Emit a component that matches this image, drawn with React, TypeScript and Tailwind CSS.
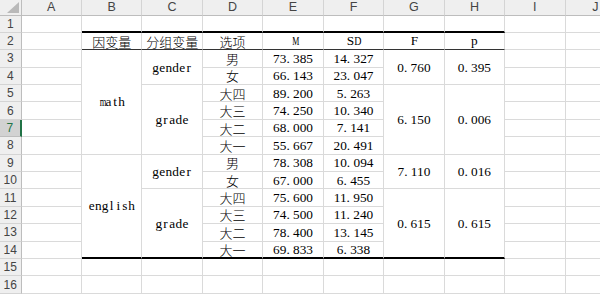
import React from "react";

const CELL =
  "border-r border-b border-[#dadada] bg-white flex items-center justify-center overflow-hidden whitespace-nowrap text-black";
const COLH =
  "border-r border-b border-r-[#d4d4d4] border-b-[#bdbdbd] bg-[#efefef] flex items-center justify-center text-[12.5px] text-[#444] font-['Liberation_Sans',sans-serif] overflow-hidden";
const ROWH =
  "border-r border-b border-r-[#bdbdbd] border-b-[#d4d4d4] bg-[#efefef] flex items-center justify-center text-[12px] text-[#444] font-['Liberation_Sans',sans-serif] overflow-hidden";
const ROWH_SEL =
  "border-r-2 border-b border-r-[#217346] border-b-[#bdbdbd] bg-[#d2d2d2] flex items-center justify-center text-[12px] text-[#217346] font-['Liberation_Sans',sans-serif] overflow-hidden";
const THICK = "border-b-2 border-b-black";
const SPAN: Record<number, string> = { 2: "row-span-2", 4: "row-span-4", 6: "row-span-6" };

// narrow the glyphs that are wider than a half-width cell
const SQUEEZE: Record<string, string> = {
  m: "scale-x-[0.64]",
  M: "scale-x-[0.6]",
  D: "scale-x-[0.75]",
};

function Num({ v }: { v: string }) {
  const [a, b] = v.split(".");
  return (
    <span className="font-['Liberation_Serif',serif] text-[13.3px] leading-none">
      {a}
      <span className="inline-block w-[0.5em]">.</span>
      {b}
    </span>
  );
}

function Lat({ t }: { t: string }) {
  return (
    <span className="font-['Liberation_Serif',serif] text-[13.3px] leading-none flex">
      {t.split("").map((ch, i) => (
        <span key={i} className="inline-block w-[0.5em] text-center">
          <span className={"inline-block " + (SQUEEZE[ch] ?? "")}>{ch}</span>
        </span>
      ))}
    </span>
  );
}

function Cjk({ t }: { t: string }) {
  return (
    <span className="font-['Noto_Sans_CJK_SC',sans-serif] text-[13px] font-light leading-none">
      {t}
    </span>
  );
}

const data = [
  { d: "男", m: "73.385", sd: "14.327" },
  { d: "女", m: "66.143", sd: "23.047" },
  { d: "大四", m: "89.200", sd: "5.263" },
  { d: "大三", m: "74.250", sd: "10.340" },
  { d: "大二", m: "68.000", sd: "7.141" },
  { d: "大一", m: "55.667", sd: "20.491" },
  { d: "男", m: "78.308", sd: "10.094" },
  { d: "女", m: "67.000", sd: "6.455" },
  { d: "大四", m: "75.600", sd: "11.950" },
  { d: "大三", m: "74.500", sd: "11.240" },
  { d: "大二", m: "78.400", sd: "13.145" },
  { d: "大一", m: "69.833", sd: "6.338" },
];

const bMerge: Record<number, { span: number; t: string }> = {
  3: { span: 6, t: "math" },
  9: { span: 6, t: "english" },
};
const cMerge: Record<number, { span: number; t: string; f: string; p: string }> = {
  3: { span: 2, t: "gender", f: "0.760", p: "0.395" },
  5: { span: 4, t: "grade", f: "6.150", p: "0.006" },
  9: { span: 2, t: "gender", f: "7.110", p: "0.016" },
  11: { span: 4, t: "grade", f: "0.615", p: "0.615" },
};

const COLS = ["A", "B", "C", "D", "E", "F", "G", "H", "I", "J"];

export default function App() {
  const cells: React.ReactNode[] = [];

  cells.push(
    <div key="corner" className="border-r border-b border-r-[#bdbdbd] border-b-[#bdbdbd] bg-[#efefef] relative">
      <svg width="21" height="15" className="absolute left-0 top-0">
        <polygon points="7,13 19,13 19,2" fill="#b9b9b9" />
      </svg>
    </div>
  );
  COLS.forEach((c) =>
    cells.push(
      <div key={"h" + c} className={COLH}>
        {c}
      </div>
    )
  );

  const rowHead = (n: number) => (
    <div key={"r" + n} className={n === 7 ? ROWH_SEL : ROWH}>
      {n}
    </div>
  );

  cells.push(rowHead(1));
  COLS.forEach((c) =>
    cells.push(
      <div key={"1" + c} className={CELL + (c >= "B" && c <= "H" ? " " + THICK : "")} />
    )
  );

  cells.push(rowHead(2));
  cells.push(<div key="2A" className={CELL} />);
  const heads: React.ReactNode[] = [
    <Cjk t="因变量" />,
    <Cjk t="分组变量" />,
    <Cjk t="选项" />,
    <Lat t="M" />,
    <Lat t="SD" />,
    <Lat t="F" />,
    <Lat t="p" />,
  ];
  heads.forEach((h, i) =>
    cells.push(
      <div key={"2h" + i} className={CELL + " border-b-[#333]"}>
        {h}
      </div>
    )
  );
  cells.push(<div key="2I" className={CELL} />);
  cells.push(<div key="2J" className={CELL} />);

  data.forEach((row, i) => {
    const r = i + 3;
    cells.push(rowHead(r));
    cells.push(<div key={r + "A"} className={CELL} />);
    const bm = bMerge[r];
    if (bm) {
      cells.push(
        <div key={r + "B"} className={CELL + " " + SPAN[bm.span] + (r === 9 ? " " + THICK : "")}>
          <Lat t={bm.t} />
        </div>
      );
    }
    const cm = cMerge[r];
    if (cm) {
      cells.push(
        <div key={r + "C"} className={CELL + " " + SPAN[cm.span] + (r === 11 ? " " + THICK : "")}>
          <Lat t={cm.t} />
        </div>
      );
    }
    const last = r === 14 ? " " + THICK : "";
    cells.push(
      <div key={r + "D"} className={CELL + last}>
        <Cjk t={row.d} />
      </div>
    );
    cells.push(
      <div key={r + "E"} className={CELL + last}>
        <Num v={row.m} />
      </div>
    );
    cells.push(
      <div key={r + "F"} className={CELL + last}>
        <Num v={row.sd} />
      </div>
    );
    if (cm) {
      cells.push(
        <div key={r + "G"} className={CELL + " " + SPAN[cm.span] + (r === 11 ? " " + THICK : "")}>
          <Num v={cm.f} />
        </div>
      );
      cells.push(
        <div key={r + "H"} className={CELL + " " + SPAN[cm.span] + (r === 11 ? " " + THICK : "")}>
          <Num v={cm.p} />
        </div>
      );
    }
    cells.push(<div key={r + "I"} className={CELL} />);
    cells.push(<div key={r + "J"} className={CELL} />);
  });

  [15, 16].forEach((r) => {
    cells.push(rowHead(r));
    COLS.forEach((c) => cells.push(<div key={r + c} className={CELL} />));
  });

  return (
    <div className="w-[600px] h-[294px] overflow-hidden bg-white">
      <div className="grid grid-cols-[21.5px_repeat(10,60.46px)] grid-rows-[15.5px_repeat(16,17.4px)] w-[626px]">
        {cells}
      </div>
    </div>
  );
}
